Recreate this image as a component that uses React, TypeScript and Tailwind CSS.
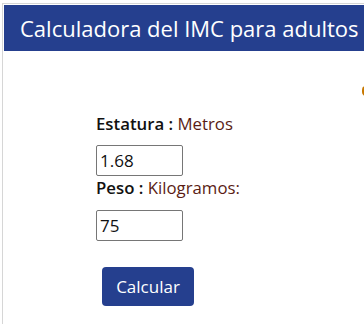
export default function App() {
  return (
    <div className="relative h-[324px] w-[364px] overflow-hidden bg-white font-['Open_Sans',sans-serif]">
      <div className="ml-[2px] mt-[3px] flex h-[321px] flex-col border-l border-t border-[#d6d6d6]">
        {/* Header */}
        <div className="ml-[1px] mt-[1px] flex h-[46px] items-center bg-[#253f8e] pl-[16px]">
          <h1 className="whitespace-nowrap text-[22px] leading-none text-white">Calculadora del IMC para adultos</h1>
        </div>

        {/* Form */}
        <div className="flex flex-col pl-[93px] pt-[62px]">
          <label className="text-[16.8px] leading-[22px] text-[#111]">
            <span className="font-semibold">Estatura :</span> <span className="text-[#5a1c14]">Metros</span>
          </label>
          <input
            defaultValue="1.68"
            className="mt-[10px] h-[31px] w-[87px] rounded-[2px] border border-[#767676] px-[3px] text-[17px] text-[#111] outline-none"
          />
          <label className="mt-[1px] text-[16.8px] leading-[22px] text-[#111]">
            <span className="font-semibold">Peso :</span> <span className="text-[#5a1c14]">Kilogramos:</span>
          </label>
          <input
            defaultValue="75"
            className="mt-[11px] h-[31px] w-[87px] rounded-[2px] border border-[#767676] px-[3px] text-[17px] text-[#111] outline-none"
          />
          <button className="ml-[6px] mt-[26px] h-[39px] w-[92px] rounded-[4px] bg-[#253f8e] text-[17px] text-white">
            Calcular
          </button>
        </div>
      </div>
      {/* cut-off orange badge at the right edge */}
      <div className="absolute left-[362px] top-[86px] h-[10px] w-[8px] rounded-full bg-[#c87800]" />
    </div>
  )
}
